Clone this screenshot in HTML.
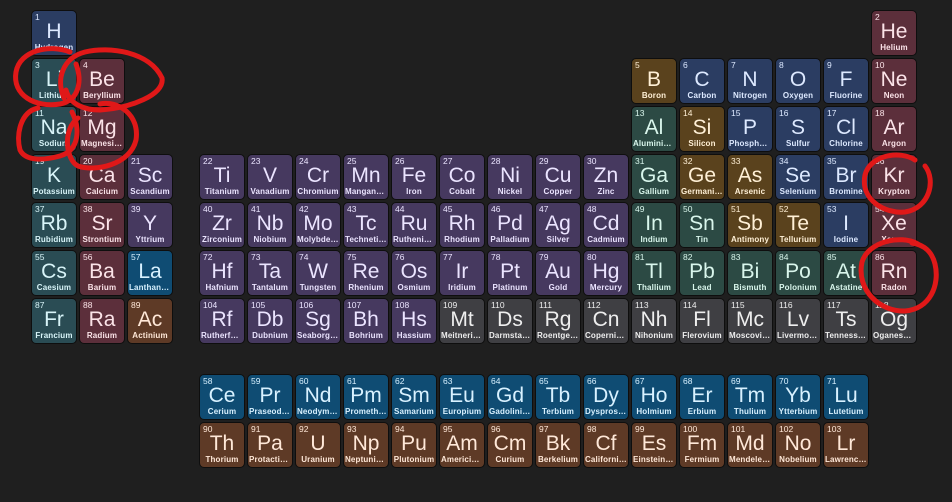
<!DOCTYPE html>
<html><head><meta charset="utf-8">
<style>
html,body{margin:0;padding:0;background:#1f1f1f;width:952px;height:502px;overflow:hidden;font-family:"Liberation Sans",sans-serif;}
.c{position:absolute;width:44px;height:44px;border:1px solid #0e0e0e;border-radius:5px;overflow:hidden;color:#e6ecf6;}
.c i{position:absolute;left:3px;top:1px;font-style:normal;font-size:8.5px;line-height:10px;}
.c b{position:absolute;left:0;right:0;top:8px;text-align:center;font-weight:normal;font-size:21px;line-height:25px;}
.c s{position:absolute;left:1px;right:1px;bottom:2px;text-align:center;text-decoration:none;font-size:8px;letter-spacing:0.15px;font-weight:bold;line-height:10px;white-space:nowrap;overflow:hidden;text-overflow:ellipsis;}
.n{background:#2b3d62;color:#dde9ff}
.a{background:#2a4c54;color:#d8f4f8}
.e{background:#5c2f3b;color:#fbe3e8}
.t{background:#46395f;color:#ebe4ff}
.p{background:#2c4a44;color:#d9f6ec}
.m{background:#5a421d;color:#fff0d6}
.l{background:#0f4c73;color:#d8f1ff}
.x{background:#5e3a26;color:#ffe8d8}
.u{background:#3f3f43;color:#eeeeee}
svg{position:absolute;left:0;top:0}
</style></head><body>
<div class="c n" style="left:31px;top:10px"><i>1</i><b>H</b><s>Hydrogen</s></div>
<div class="c e" style="left:871px;top:10px"><i>2</i><b>He</b><s>Helium</s></div>

<div class="c a" style="left:31px;top:58px"><i>3</i><b>Li</b><s>Lithium</s></div>
<div class="c e" style="left:79px;top:58px"><i>4</i><b>Be</b><s>Beryllium</s></div>
<div class="c m" style="left:631px;top:58px"><i>5</i><b>B</b><s>Boron</s></div>
<div class="c n" style="left:679px;top:58px"><i>6</i><b>C</b><s>Carbon</s></div>
<div class="c n" style="left:727px;top:58px"><i>7</i><b>N</b><s>Nitrogen</s></div>
<div class="c n" style="left:775px;top:58px"><i>8</i><b>O</b><s>Oxygen</s></div>
<div class="c n" style="left:823px;top:58px"><i>9</i><b>F</b><s>Fluorine</s></div>
<div class="c e" style="left:871px;top:58px"><i>10</i><b>Ne</b><s>Neon</s></div>

<div class="c a" style="left:31px;top:106px"><i>11</i><b>Na</b><s>Sodium</s></div>
<div class="c e" style="left:79px;top:106px"><i>12</i><b>Mg</b><s>Magnesium</s></div>
<div class="c p" style="left:631px;top:106px"><i>13</i><b>Al</b><s>Aluminium</s></div>
<div class="c m" style="left:679px;top:106px"><i>14</i><b>Si</b><s>Silicon</s></div>
<div class="c n" style="left:727px;top:106px"><i>15</i><b>P</b><s>Phosphorus</s></div>
<div class="c n" style="left:775px;top:106px"><i>16</i><b>S</b><s>Sulfur</s></div>
<div class="c n" style="left:823px;top:106px"><i>17</i><b>Cl</b><s>Chlorine</s></div>
<div class="c e" style="left:871px;top:106px"><i>18</i><b>Ar</b><s>Argon</s></div>

<div class="c a" style="left:31px;top:154px"><i>19</i><b>K</b><s>Potassium</s></div>
<div class="c e" style="left:79px;top:154px"><i>20</i><b>Ca</b><s>Calcium</s></div>
<div class="c t" style="left:127px;top:154px"><i>21</i><b>Sc</b><s>Scandium</s></div>
<div class="c t" style="left:199px;top:154px"><i>22</i><b>Ti</b><s>Titanium</s></div>
<div class="c t" style="left:247px;top:154px"><i>23</i><b>V</b><s>Vanadium</s></div>
<div class="c t" style="left:295px;top:154px"><i>24</i><b>Cr</b><s>Chromium</s></div>
<div class="c t" style="left:343px;top:154px"><i>25</i><b>Mn</b><s>Manganese</s></div>
<div class="c t" style="left:391px;top:154px"><i>26</i><b>Fe</b><s>Iron</s></div>
<div class="c t" style="left:439px;top:154px"><i>27</i><b>Co</b><s>Cobalt</s></div>
<div class="c t" style="left:487px;top:154px"><i>28</i><b>Ni</b><s>Nickel</s></div>
<div class="c t" style="left:535px;top:154px"><i>29</i><b>Cu</b><s>Copper</s></div>
<div class="c t" style="left:583px;top:154px"><i>30</i><b>Zn</b><s>Zinc</s></div>
<div class="c p" style="left:631px;top:154px"><i>31</i><b>Ga</b><s>Gallium</s></div>
<div class="c m" style="left:679px;top:154px"><i>32</i><b>Ge</b><s>Germanium</s></div>
<div class="c m" style="left:727px;top:154px"><i>33</i><b>As</b><s>Arsenic</s></div>
<div class="c n" style="left:775px;top:154px"><i>34</i><b>Se</b><s>Selenium</s></div>
<div class="c n" style="left:823px;top:154px"><i>35</i><b>Br</b><s>Bromine</s></div>
<div class="c e" style="left:871px;top:154px"><i>36</i><b>Kr</b><s>Krypton</s></div>

<div class="c a" style="left:31px;top:202px"><i>37</i><b>Rb</b><s>Rubidium</s></div>
<div class="c e" style="left:79px;top:202px"><i>38</i><b>Sr</b><s>Strontium</s></div>
<div class="c t" style="left:127px;top:202px"><i>39</i><b>Y</b><s>Yttrium</s></div>
<div class="c t" style="left:199px;top:202px"><i>40</i><b>Zr</b><s>Zirconium</s></div>
<div class="c t" style="left:247px;top:202px"><i>41</i><b>Nb</b><s>Niobium</s></div>
<div class="c t" style="left:295px;top:202px"><i>42</i><b>Mo</b><s>Molybdenum</s></div>
<div class="c t" style="left:343px;top:202px"><i>43</i><b>Tc</b><s>Technetium</s></div>
<div class="c t" style="left:391px;top:202px"><i>44</i><b>Ru</b><s>Ruthenium</s></div>
<div class="c t" style="left:439px;top:202px"><i>45</i><b>Rh</b><s>Rhodium</s></div>
<div class="c t" style="left:487px;top:202px"><i>46</i><b>Pd</b><s>Palladium</s></div>
<div class="c t" style="left:535px;top:202px"><i>47</i><b>Ag</b><s>Silver</s></div>
<div class="c t" style="left:583px;top:202px"><i>48</i><b>Cd</b><s>Cadmium</s></div>
<div class="c p" style="left:631px;top:202px"><i>49</i><b>In</b><s>Indium</s></div>
<div class="c p" style="left:679px;top:202px"><i>50</i><b>Sn</b><s>Tin</s></div>
<div class="c m" style="left:727px;top:202px"><i>51</i><b>Sb</b><s>Antimony</s></div>
<div class="c m" style="left:775px;top:202px"><i>52</i><b>Te</b><s>Tellurium</s></div>
<div class="c n" style="left:823px;top:202px"><i>53</i><b>I</b><s>Iodine</s></div>
<div class="c e" style="left:871px;top:202px"><i>54</i><b>Xe</b><s>Xenon</s></div>

<div class="c a" style="left:31px;top:250px"><i>55</i><b>Cs</b><s>Caesium</s></div>
<div class="c e" style="left:79px;top:250px"><i>56</i><b>Ba</b><s>Barium</s></div>
<div class="c l" style="left:127px;top:250px"><i>57</i><b>La</b><s>Lanthanum</s></div>
<div class="c t" style="left:199px;top:250px"><i>72</i><b>Hf</b><s>Hafnium</s></div>
<div class="c t" style="left:247px;top:250px"><i>73</i><b>Ta</b><s>Tantalum</s></div>
<div class="c t" style="left:295px;top:250px"><i>74</i><b>W</b><s>Tungsten</s></div>
<div class="c t" style="left:343px;top:250px"><i>75</i><b>Re</b><s>Rhenium</s></div>
<div class="c t" style="left:391px;top:250px"><i>76</i><b>Os</b><s>Osmium</s></div>
<div class="c t" style="left:439px;top:250px"><i>77</i><b>Ir</b><s>Iridium</s></div>
<div class="c t" style="left:487px;top:250px"><i>78</i><b>Pt</b><s>Platinum</s></div>
<div class="c t" style="left:535px;top:250px"><i>79</i><b>Au</b><s>Gold</s></div>
<div class="c t" style="left:583px;top:250px"><i>80</i><b>Hg</b><s>Mercury</s></div>
<div class="c p" style="left:631px;top:250px"><i>81</i><b>Tl</b><s>Thallium</s></div>
<div class="c p" style="left:679px;top:250px"><i>82</i><b>Pb</b><s>Lead</s></div>
<div class="c p" style="left:727px;top:250px"><i>83</i><b>Bi</b><s>Bismuth</s></div>
<div class="c p" style="left:775px;top:250px"><i>84</i><b>Po</b><s>Polonium</s></div>
<div class="c p" style="left:823px;top:250px"><i>85</i><b>At</b><s>Astatine</s></div>
<div class="c e" style="left:871px;top:250px"><i>86</i><b>Rn</b><s>Radon</s></div>

<div class="c a" style="left:31px;top:298px"><i>87</i><b>Fr</b><s>Francium</s></div>
<div class="c e" style="left:79px;top:298px"><i>88</i><b>Ra</b><s>Radium</s></div>
<div class="c x" style="left:127px;top:298px"><i>89</i><b>Ac</b><s>Actinium</s></div>
<div class="c t" style="left:199px;top:298px"><i>104</i><b>Rf</b><s>Rutherfordium</s></div>
<div class="c t" style="left:247px;top:298px"><i>105</i><b>Db</b><s>Dubnium</s></div>
<div class="c t" style="left:295px;top:298px"><i>106</i><b>Sg</b><s>Seaborgium</s></div>
<div class="c t" style="left:343px;top:298px"><i>107</i><b>Bh</b><s>Bohrium</s></div>
<div class="c t" style="left:391px;top:298px"><i>108</i><b>Hs</b><s>Hassium</s></div>
<div class="c u" style="left:439px;top:298px"><i>109</i><b>Mt</b><s>Meitnerium</s></div>
<div class="c u" style="left:487px;top:298px"><i>110</i><b>Ds</b><s>Darmstadtium</s></div>
<div class="c u" style="left:535px;top:298px"><i>111</i><b>Rg</b><s>Roentgenium</s></div>
<div class="c u" style="left:583px;top:298px"><i>112</i><b>Cn</b><s>Copernicium</s></div>
<div class="c u" style="left:631px;top:298px"><i>113</i><b>Nh</b><s>Nihonium</s></div>
<div class="c u" style="left:679px;top:298px"><i>114</i><b>Fl</b><s>Flerovium</s></div>
<div class="c u" style="left:727px;top:298px"><i>115</i><b>Mc</b><s>Moscovium</s></div>
<div class="c u" style="left:775px;top:298px"><i>116</i><b>Lv</b><s>Livermorium</s></div>
<div class="c u" style="left:823px;top:298px"><i>117</i><b>Ts</b><s>Tennessine</s></div>
<div class="c u" style="left:871px;top:298px"><i>118</i><b>Og</b><s>Oganesson</s></div>

<div class="c l" style="left:199px;top:374px"><i>58</i><b>Ce</b><s>Cerium</s></div>
<div class="c l" style="left:247px;top:374px"><i>59</i><b>Pr</b><s>Praseodymium</s></div>
<div class="c l" style="left:295px;top:374px"><i>60</i><b>Nd</b><s>Neodymium</s></div>
<div class="c l" style="left:343px;top:374px"><i>61</i><b>Pm</b><s>Promethium</s></div>
<div class="c l" style="left:391px;top:374px"><i>62</i><b>Sm</b><s>Samarium</s></div>
<div class="c l" style="left:439px;top:374px"><i>63</i><b>Eu</b><s>Europium</s></div>
<div class="c l" style="left:487px;top:374px"><i>64</i><b>Gd</b><s>Gadolinium</s></div>
<div class="c l" style="left:535px;top:374px"><i>65</i><b>Tb</b><s>Terbium</s></div>
<div class="c l" style="left:583px;top:374px"><i>66</i><b>Dy</b><s>Dysprosium</s></div>
<div class="c l" style="left:631px;top:374px"><i>67</i><b>Ho</b><s>Holmium</s></div>
<div class="c l" style="left:679px;top:374px"><i>68</i><b>Er</b><s>Erbium</s></div>
<div class="c l" style="left:727px;top:374px"><i>69</i><b>Tm</b><s>Thulium</s></div>
<div class="c l" style="left:775px;top:374px"><i>70</i><b>Yb</b><s>Ytterbium</s></div>
<div class="c l" style="left:823px;top:374px"><i>71</i><b>Lu</b><s>Lutetium</s></div>

<div class="c x" style="left:199px;top:422px"><i>90</i><b>Th</b><s>Thorium</s></div>
<div class="c x" style="left:247px;top:422px"><i>91</i><b>Pa</b><s>Protactinium</s></div>
<div class="c x" style="left:295px;top:422px"><i>92</i><b>U</b><s>Uranium</s></div>
<div class="c x" style="left:343px;top:422px"><i>93</i><b>Np</b><s>Neptunium</s></div>
<div class="c x" style="left:391px;top:422px"><i>94</i><b>Pu</b><s>Plutonium</s></div>
<div class="c x" style="left:439px;top:422px"><i>95</i><b>Am</b><s>Americium</s></div>
<div class="c x" style="left:487px;top:422px"><i>96</i><b>Cm</b><s>Curium</s></div>
<div class="c x" style="left:535px;top:422px"><i>97</i><b>Bk</b><s>Berkelium</s></div>
<div class="c x" style="left:583px;top:422px"><i>98</i><b>Cf</b><s>Californium</s></div>
<div class="c x" style="left:631px;top:422px"><i>99</i><b>Es</b><s>Einsteinium</s></div>
<div class="c x" style="left:679px;top:422px"><i>100</i><b>Fm</b><s>Fermium</s></div>
<div class="c x" style="left:727px;top:422px"><i>101</i><b>Md</b><s>Mendelevium</s></div>
<div class="c x" style="left:775px;top:422px"><i>102</i><b>No</b><s>Nobelium</s></div>
<div class="c x" style="left:823px;top:422px"><i>103</i><b>Lr</b><s>Lawrencium</s></div>

<svg width="952" height="502" viewBox="0 0 952 502" fill="none" stroke="#e01818" stroke-width="5" stroke-linecap="round">
<path d="M70 52 C50 44 20 50 16 72 C12 95 35 108 60 104 C80 100 82 80 76 64"/>
<path d="M64 98 C56 80 62 58 85 52 C110 46 150 52 162 78 C165 95 130 108 100 110 C85 110 70 105 66 90"/>
<path d="M38 108 C20 112 16 135 20 150 C26 162 45 160 60 156 C80 150 80 128 72 112"/>
<path d="M78 118 C62 130 66 160 78 166 C95 172 130 165 136 140 C140 115 118 100 100 104"/>
<path d="M915 160 C900 150 870 155 865 175 C860 200 885 214 905 212 C930 208 936 180 925 166"/>
<path d="M918 244 C900 234 868 242 862 262 C856 290 880 312 905 311 C930 309 940 285 935 264 C932 252 925 245 912 243"/>
</svg>
</body></html>
